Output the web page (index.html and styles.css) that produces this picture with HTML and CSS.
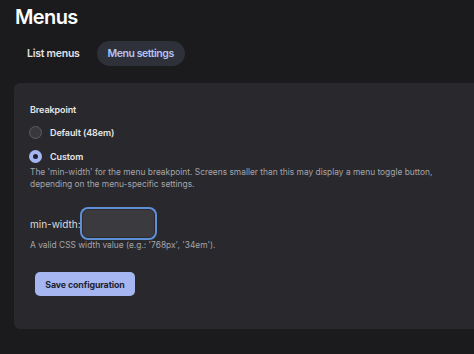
FILE: index.html
```html
<!DOCTYPE html>
<html lang="en">
<head>
	<meta charset="UTF-8">
	<title>Menus</title>
	<link rel="stylesheet" href="styles.css">
</head>
<body>
	<header class="page-head">
		<h1>Menus</h1>
		<ul class="tabs">
			<li>List menus</li>
			<li class="active">Menu settings</li>
		</ul>
	</header>
	<form class="card">
		<div class="legend">Breakpoint</div>
		<label class="radio">
			<span class="dot"></span>Default (48em)
		</label>
		<label class="radio">
			<span class="dot checked"></span>Custom
		</label>
		<p class="desc">The 'min-width' for the menu breakpoint. Screens smaller than this may display a menu toggle button, depending on the menu-specific settings.</p>
		<div class="field">
			<label>min-width:</label>
			<span class="input"></span>
		</div>
		<p class="desc help">A valid CSS width value (e.g.: '768px', '34em').</p>
		<button type="button" class="save">Save configuration</button>
	</form>
</body>
</html>
```

FILE: styles.css
```css
body, h1, ul, li, p, form {
	margin: 0;
	padding: 0;
}

body {
	background-color: #1b1b1d;
	color: #e6e6e8;
	font-family: Inter, "Noto Sans", sans-serif;
	overflow: hidden;
}

.page-head {
	padding-left: 15px;
}

.page-head h1 {
	font-size: 20px;
	font-weight: 600;
	line-height: 28px;
	padding-top: 3px;
	color: #fff;
	letter-spacing: -0.6px;
}

.tabs {
	display: flex;
	gap: 5px;
	margin-top: 10px;
	list-style-type: none;
}

.tabs li {
	height: 25px;
	line-height: 25px;
	padding: 0 12px;
	border-radius: 13px;
	font-size: 10.5px;
	font-weight: 600;
	letter-spacing: -0.25px;
	color: #e2e2e4;
}

.tabs li.active {
	padding: 0 11px;
	background-color: #2e303a;
	color: #b4c2f0;
	letter-spacing: -0.45px;
}

.card {
	margin: 17px 0 0 14px;
	padding: 19px 16px 33px;
	background-color: #29292d;
	border-radius: 6px 0 0 6px;
}

.legend {
	font-size: 9px;
	font-weight: 600;
	line-height: 16px;
	letter-spacing: -0.1px;
}

.radio {
	display: flex;
	align-items: center;
	gap: 8px;
	height: 20px;
	margin-top: 4px;
	font-size: 9px;
	font-weight: 600;
	letter-spacing: -0.1px;
}

.legend + .radio {
	margin-top: 4px;
}

.radio .dot {
	width: 11px;
	height: 11px;
	margin-left: -1px;
	border: 1px solid #5c5c62;
	border-radius: 50%;
	background-color: #38383d;
}

.radio .dot.checked {
	box-sizing: border-box;
	width: 13px;
	height: 13px;
	border: 4px solid #a6b6f0;
	background-color: #1e2030;
}

.desc {
	font-size: 8.4px;
	line-height: 12px;
	color: #a4a4aa;
}

.field {
	display: flex;
	align-items: center;
	margin-top: 19px;
	font-size: 10px;
	color: #dcdcde;
}

.field .input {
	box-sizing: border-box;
	width: 73px;
	height: 29px;
	border: 1px solid #2a2a2e;
	border-radius: 6px;
	background-color: #3a3a3f;
	box-shadow: 0 0 0 2px #5f8fd6;
	margin-left: 1px;
}

.help {
	margin-top: 1px;
}

.save {
	display: block;
	width: 100px;
	height: 24px;
	margin: 21px 0 0 5px;
	border: 0;
	border-radius: 5px;
	background-color: #a6b6f0;
	color: #1c1e33;
	font-family: inherit;
	font-size: 8.8px;
	font-weight: 700;
	letter-spacing: -0.1px;
	white-space: nowrap;
}
```
